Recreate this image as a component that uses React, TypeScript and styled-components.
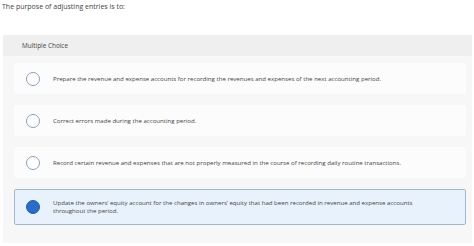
import React from 'react'
import styled, { createGlobalStyle } from 'styled-components'

const GlobalStyle = createGlobalStyle`
    body {
        margin: 0;
        font-family: 'Open Sans', 'Liberation Sans', sans-serif;
        background: #ffffff;
        color: #333333;
    }
`

const Question = styled.div`
    padding: 2px 2px 0;
    height: 35px;
    box-sizing: border-box;
    font-size: 7px;
    line-height: 10px;
    color: #444444;
`

const Panel = styled.section`
    margin: 0 2px 0 3px;
    background: #f7f7f7;
`

const PanelHeader = styled.div`
    height: 21px;
    display: flex;
    align-items: center;
    padding-left: 19px;
    background: #efefef;
    font-size: 6.4px;
    color: #444444;
`

const Choices = styled.div`
    display: flex;
    flex-direction: column;
    gap: 11px;
    padding: 7px 6px 18px 11px;
`

type ChoiceProps = {
    selected?: boolean
}

const ChoiceRow = styled.div<ChoiceProps>`
    display: flex;
    align-items: center;
    gap: 13px;
    min-height: 31px;
    box-sizing: border-box;
    padding: 4px 11px;
    background: ${p => (p.selected ? '#e8f2fc' : '#fcfcfc')};
    border: 1px solid ${p => (p.selected ? '#a3b8cf' : '#fcfcfc')};
    border-radius: 2px;
`

const Radio = styled.span<ChoiceProps>`
    flex: none;
    width: 14px;
    height: 14px;
    box-sizing: border-box;
    border-radius: 50%;
    border: 1px solid ${p => (p.selected ? '#1f5fb3' : '#8aa0b8')};
    background: ${p => (p.selected ? '#2b6cc4' : '#ffffff')};
`

const Label = styled.span`
    font-size: 6.1px;
    line-height: 8px;
    padding: 5px 0;
    color: #444444;
`

const choices = [
    'Prepare the revenue and expense accounts for recording the revenues and expenses of the next accounting period.',
    'Correct errors made during the accounting period.',
    'Record certain revenue and expenses that are not properly measured in the course of recording daily routine transactions.',
    'Update the owners\u2019 equity account for the changes in owners\u2019 equity that had been recorded in revenue and expense accounts throughout the period.',
]

const App = () => {
    const selectedIndex = 3
    return (
        <>
            <GlobalStyle />
            <Question>The purpose of adjusting entries is to:</Question>
            <Panel>
                <PanelHeader>Multiple Choice</PanelHeader>
                <Choices>
                    {choices.map((text, i) => (
                        <ChoiceRow key={i} selected={i === selectedIndex}>
                            <Radio selected={i === selectedIndex} />
                            <Label style={i === selectedIndex ? { maxWidth: 372 } : undefined}>{text}</Label>
                        </ChoiceRow>
                    ))}
                </Choices>
            </Panel>
        </>
    )
}

export default App
